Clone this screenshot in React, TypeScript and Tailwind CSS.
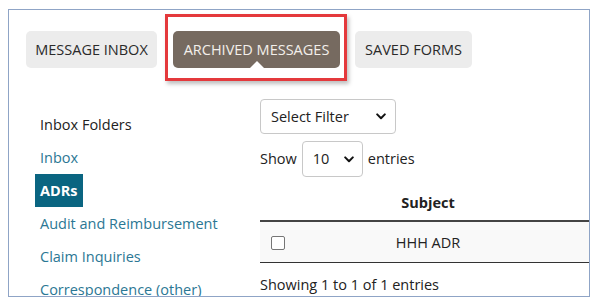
import React from "react";

const font = { fontFamily: '"Open Sans", "Noto Sans", sans-serif' };

function Chevron() {
  return (
    <svg width="10" height="7" viewBox="0 0 10 7" className="shrink-0">
      <path d="M1.2 1.4 L5 5.2 L8.8 1.4" fill="none" stroke="#111" strokeWidth="2" strokeLinecap="round" strokeLinejoin="round" />
    </svg>
  );
}

export default function App() {
  const folders = [
    "Inbox",
    "ADRs",
    "Audit and Reimbursement",
    "Claim Inquiries",
    "Correspondence (other)",
  ];
  return (
    <div className="w-[600px] h-[305px] bg-white overflow-hidden pt-[9px] pl-[8px]" style={font}>
      <div className="w-[582px] h-[288px] border border-[#8fa4c6] overflow-hidden">
        {/* tabs */}
        <div className="flex gap-[16px] pl-[17px] pt-[21px]">
          <div className="w-[131px] h-[37px] rounded-[5px] bg-[#ececec] text-[#2a2a2a] text-[14.5px] flex items-center justify-center">
            MESSAGE INBOX
          </div>
          <div className="relative">
            <div className="relative w-[167px] h-[37px] rounded-[5px] bg-[#766a60] text-[#f3efeb] text-[14.5px] flex items-center justify-center">
              ARCHIVED MESSAGES
              <span className="absolute left-[77px] bottom-0 w-0 h-0 border-l-[7px] border-r-[7px] border-b-[7px] border-l-transparent border-r-transparent border-b-white" />
            </div>
            <div className="absolute -left-[8px] -right-[7px] -top-[17px] -bottom-[13px] border-[3px] border-[#e4393c] shadow-[2px_3px_4px_rgba(0,0,0,0.25)]" />
          </div>
          <div className="w-[117px] h-[37px] rounded-[5px] bg-[#ececec] text-[#2a2a2a] text-[14.5px] flex items-center justify-center ml-[-1px]">
            SAVED FORMS
          </div>
        </div>

        {/* body */}
        <div className="flex pt-[30px]">
          <div className="w-[251px] shrink-0 pl-[26px] pt-[10px] text-[14.5px]">
            <div className="h-[33px] flex items-center pl-[5px] text-[#222]">Inbox Folders</div>
            {folders.map((f) =>
              f === "ADRs" ? (
                <div key={f} className="h-[33px] flex items-center">
                  <span className="h-[33px] px-[5px] flex items-center bg-[#0a6581] text-white font-bold">ADRs</span>
                </div>
              ) : (
                <div key={f} className="h-[33px] flex items-center pl-[5px] text-[#2b7794] whitespace-nowrap">
                  {f}
                </div>
              )
            )}
          </div>

          <div className="flex-1 min-w-0 text-[14.5px] text-[#222] pt-[1px]">
            <div className="w-[136px] h-[35px] border border-[#c8c8c8] rounded-[4px] flex items-center justify-between pl-[10px] pr-[9px]">
              <span>Select Filter</span>
              <Chevron />
            </div>
            <div className="flex items-center mt-[7px] h-[36px]">
              <span>Show</span>
              <div className="ml-[5px] w-[61px] h-[36px] border border-[#c8c8c8] rounded-[4px] flex items-center justify-between pl-[10px] pr-[8px]">
                <span>10</span>
                <Chevron />
              </div>
              <span className="ml-[5px]">entries</span>
            </div>
            <div className="w-[340px]">
              <div className="flex h-[45px] items-end pb-[6px] border-b-2 border-[#444]">
                <div className="w-[50px] shrink-0" />
                <div className="w-[236px] shrink-0 text-center font-bold">Subject</div>
              </div>
              <div className="flex h-[41px] items-center pt-[2px] bg-[#f9f9f9] border-b border-[#333]">
                <div className="w-[50px] shrink-0 pl-[11px] flex items-center">
                  <span className="w-[14px] h-[14px] border border-[#767676] rounded-[2px] bg-white" />
                </div>
                <div className="w-[236px] shrink-0 text-center">HHH ADR</div>
              </div>
            </div>
            <div className="mt-[11px]">Showing 1 to 1 of 1 entries</div>
          </div>
        </div>
      </div>
    </div>
  );
}
